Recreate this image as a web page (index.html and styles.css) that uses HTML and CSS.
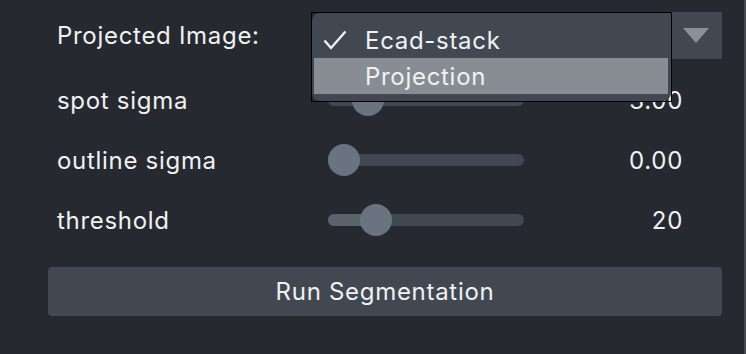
FILE: index.html
```html
<!DOCTYPE html>
<html lang="en">

<head>
    <meta charset="UTF-8">
    <meta name="viewport" content="width=device-width, initial-scale=1.0">
    <title>Segmentation</title>
    <link rel="stylesheet" href="styles.css">
</head>

<body>
    <section class="seg-panel">
        <div class="seg-combo-row">
            <span class="seg-label">Projected Image:</span>
            <div class="seg-combo">
                <span class="seg-combo-arrow"></span>
            </div>
        </div>

        <div class="seg-params">
            <span class="seg-label">spot sigma</span>
            <div class="seg-slider"><span class="seg-handle handle-spot"></span></div>
            <span class="seg-value">3.00</span>

            <span class="seg-label">outline sigma</span>
            <div class="seg-slider"><span class="seg-handle handle-outline"></span></div>
            <span class="seg-value">0.00</span>

            <span class="seg-label">threshold</span>
            <div class="seg-slider"><span class="seg-fill"></span><span class="seg-handle handle-threshold"></span></div>
            <span class="seg-value">20</span>
        </div>

        <div class="seg-footer">
            <button class="seg-run">Run Segmentation</button>
        </div>

        <!-- open dropdown of the combo box -->
        <div class="seg-menu">
            <div class="seg-menu-inner">
                <div class="seg-menu-item">
                    <svg class="seg-check" width="24" height="20" viewBox="0 0 24 20">
                        <polyline points="1.5,10.5 8,18 22.5,1.5" fill="none" stroke="#eef0f2" stroke-width="2.4" />
                    </svg>
                    <span>Ecad-stack</span>
                </div>
                <div class="seg-menu-item active">
                    <span>Projection</span>
                </div>
            </div>
        </div>
    </section>
</body>

</html>
```

FILE: styles.css
```css
* {
    margin: 0;
    padding: 0;
    box-sizing: border-box;
}

html,
body {
    width: 746px;
    height: 354px;
    overflow: hidden;
}

body {
    background: #262930;
    border-right: 2px solid #46494f;
    font-family: Inter, "Open Sans", "Liberation Sans", sans-serif;
    font-size: 24px;
    letter-spacing: 0.7px;
    color: #f0f1f2;
}

.seg-panel {
    position: relative;
    padding: 12px 22px 0 48px;
}

.seg-combo-row {
    display: grid;
    grid-template-columns: 271px 1fr;
    align-items: center;
    height: 47px;
    padding-left: 9px;
}

.seg-combo {
    height: 47px;
    background: #414851;
    display: flex;
    justify-content: flex-end;
    align-items: center;
    padding-right: 13px;
}

.seg-combo-arrow {
    width: 0;
    height: 0;
    border-left: 13px solid transparent;
    border-right: 13px solid transparent;
    border-top: 15px solid #8b9096;
}

.seg-label {
    white-space: nowrap;
}

.seg-params {
    display: grid;
    grid-template-columns: 271px 196px 159px;
    grid-auto-rows: 60px;
    align-items: center;
    padding-left: 9px;
    margin-top: 11px;
}

.seg-slider {
    position: relative;
    height: 12px;
    border-radius: 6px;
    background: #414851;
}

.seg-fill {
    position: absolute;
    left: 0;
    top: 0;
    width: 48px;
    height: 12px;
    border-radius: 6px;
    background: #5a626c;
}

.seg-handle {
    position: absolute;
    top: -10px;
    width: 32px;
    height: 32px;
    border-radius: 50%;
    background: #6a7480;
}

.handle-spot {
    left: 24px;
}

.handle-outline {
    left: 0;
}

.handle-threshold {
    left: 32px;
}

.seg-value {
    text-align: right;
}

.seg-footer {
    margin-top: 17px;
}

.seg-run {
    display: block;
    width: 100%;
    height: 49px;
    border: none;
    border-radius: 4px;
    background: #414851;
    color: #f0f1f2;
    font-family: inherit;
    font-size: 24px;
    letter-spacing: 0.7px;
}

.seg-menu {
    position: absolute;
    left: 311px;
    top: 12px;
    width: 361px;
    height: 90px;
    border: 1px solid #000;
}

.seg-menu-inner {
    height: 100%;
    border-radius: 8px;
    background: #414851;
    padding: 9px 3px 7px 2px;
}

.seg-menu-item {
    position: relative;
    height: 36px;
    display: flex;
    align-items: center;
    padding-left: 51px;
}

.seg-menu-item.active {
    background: #878d93;
}

.seg-check {
    position: absolute;
    left: 9px;
    top: 8px;
}
```
